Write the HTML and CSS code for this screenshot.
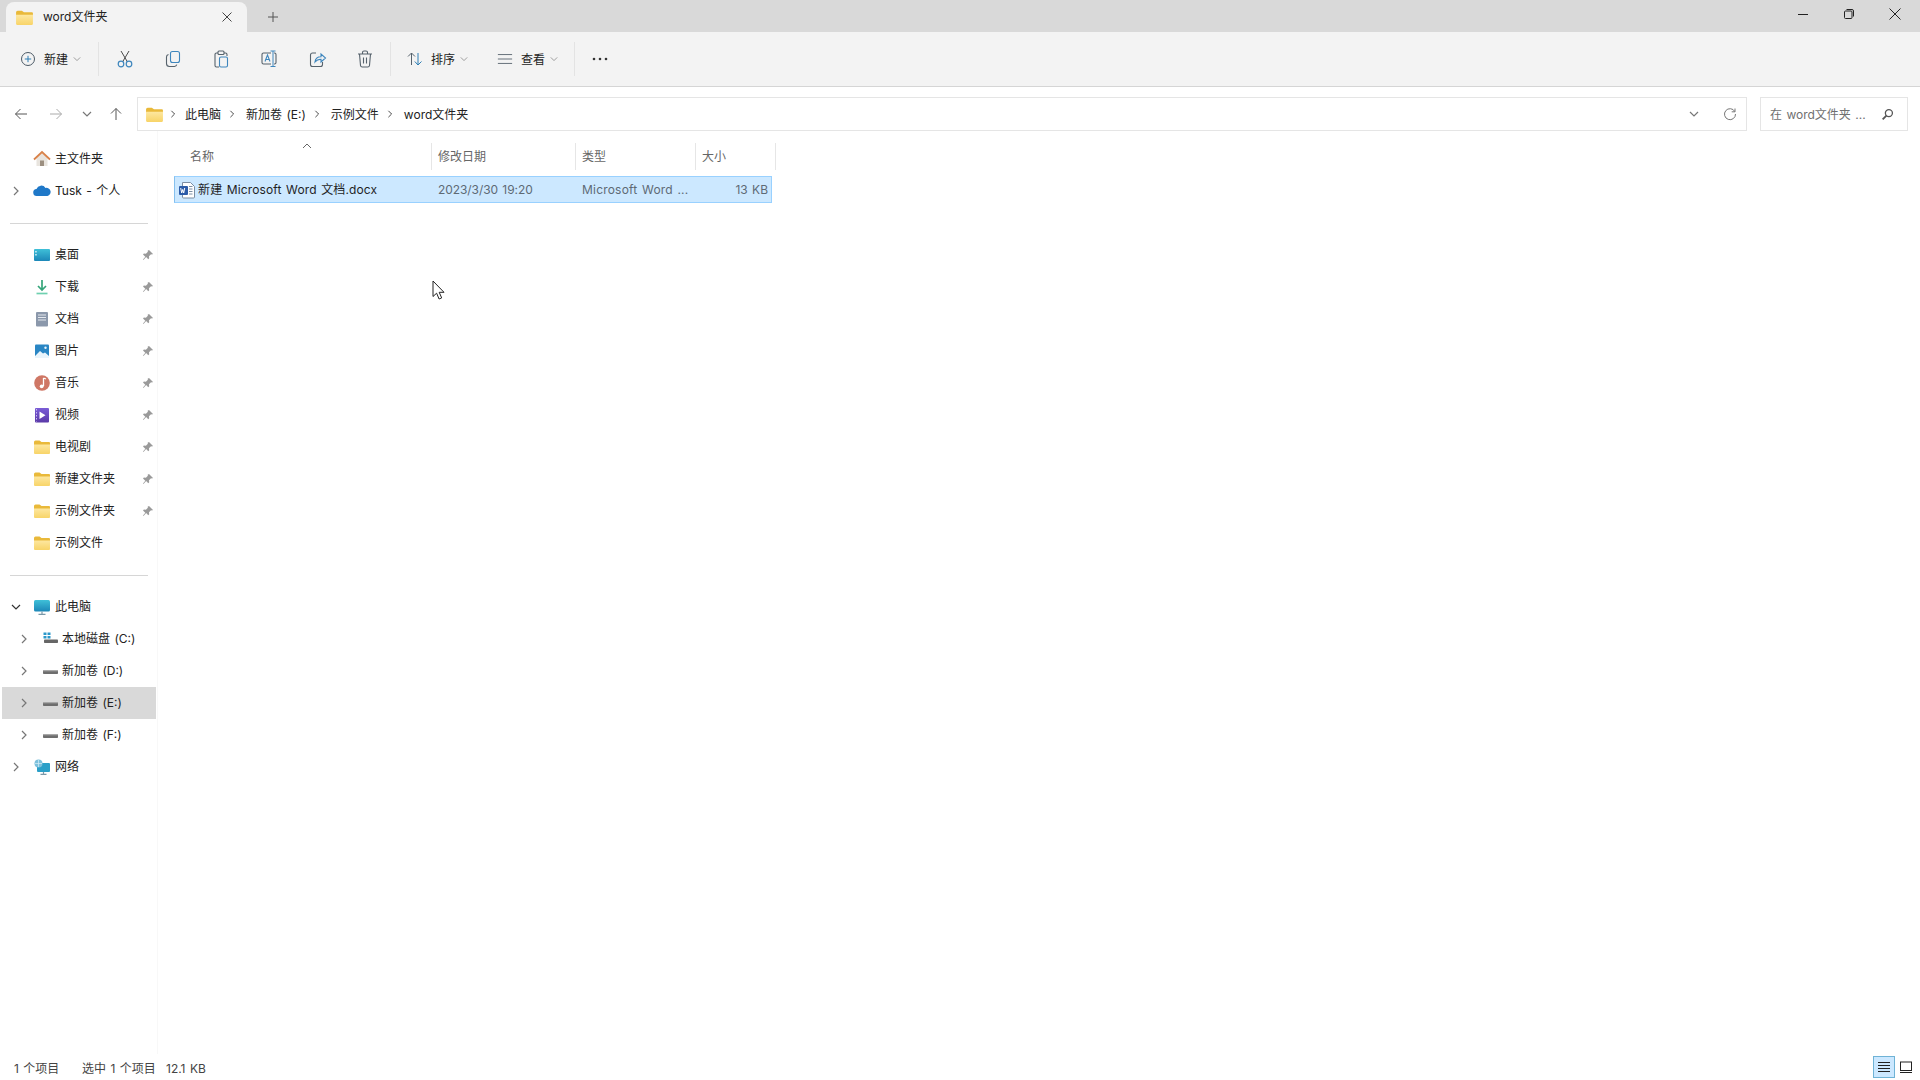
FILE: index.html
```html
<!DOCTYPE html>
<html lang="zh-CN">
<head>
<meta charset="utf-8">
<title>word文件夹</title>
<link rel="stylesheet" href="styles.css">
</head>
<body>
<svg class="sprite" xmlns="http://www.w3.org/2000/svg">
  <defs>
    <linearGradient id="fg" x1="0" y1="0" x2="0" y2="1"><stop offset="0" stop-color="#fde7a0"/><stop offset="1" stop-color="#f8d468"/></linearGradient>
    <linearGradient id="dg" x1="0" y1="0" x2="0" y2="1"><stop offset="0" stop-color="#3fc0d8"/><stop offset="1" stop-color="#1c87b8"/></linearGradient>
    <linearGradient id="vg" x1="0" y1="0" x2="0" y2="1"><stop offset="0" stop-color="#7a5cd6"/><stop offset="1" stop-color="#5b3aa8"/></linearGradient>
    <symbol id="folder" viewBox="0 0 18 16"><path d="M1 3a1.5 1.5 0 0 1 1.5-1.5h4L8.500 3H16a1 1 0 0 1 1 1v2H1z" fill="#e9b93a"/><path d="M1 5.500h16V14a1 1 0 0 1-1 1H2a1 1 0 0 1-1-1z" fill="url(#fg)"/></symbol>
    <symbol id="pin" viewBox="0 0 12 12"><path d="M7 1l4 4-1 .6-1-.3-2 2 .2 2-.9.9-2.200-2.300L1.500 11 1 10.500 3.300 7.700 1 5.500l.9-.9 2 .2 2-2-.3-1z" fill="#9a9a9a"/></symbol>
    <symbol id="right" viewBox="0 0 10 10"><path d="M3 1l4 4-4 4" fill="none" stroke="currentColor" stroke-width="1.200"/></symbol>
    <symbol id="down" viewBox="0 0 10 10"><path d="M1 3l4 4 4-4" fill="none" stroke="currentColor" stroke-width="1.200"/></symbol>
    <symbol id="drive" viewBox="0 0 18 18"><rect x="2" y="8" width="15" height="4" rx=".8" fill="#6e6e6e"/><rect x="2" y="8" width="15" height="1.300" fill="#a8a8a8"/></symbol>
  </defs>
</svg>

<header class="titlebar">
  <div class="tab">
    <svg class="tab-icon"><use href="#folder"/></svg>
    <span class="tab-title">word文件夹</span>
    <svg class="tab-close" viewBox="0 0 12 12"><path d="M1.500 1.500l9 9M10.500 1.500l-9 9" stroke="#444" fill="none"/></svg>
  </div>
  <svg class="tab-add" viewBox="0 0 12 12"><path d="M6 1v10M1 6h10" stroke="#555" fill="none"/></svg>
  <div class="winctl">
    <svg class="wc" viewBox="0 0 12 12"><path d="M1 6.500h10" stroke="#222" fill="none"/></svg>
    <svg class="wc" viewBox="0 0 12 12"><rect x="1.500" y="3" width="7.500" height="7.500" rx="1" fill="none" stroke="#222"/><path d="M3.500 1.500h5.500a1.500 1.500 0 0 1 1.500 1.500v5.500" fill="none" stroke="#222"/></svg>
    <svg class="wc" viewBox="0 0 12 12"><path d="M.5.500l11 11M11.500.500l-11 11" stroke="#222" fill="none"/></svg>
  </div>
</header>

<div class="toolbar">
  <div class="tb-labeled tb-new">
    <svg class="tb-i" viewBox="0 0 18 18"><circle cx="9" cy="9" r="6.500" fill="none" stroke="#4c5a66"/><path d="M9 5.800v6.400M5.800 9h6.400" stroke="#2f7fb5" fill="none"/></svg>
    <span>新建</span>
    <svg class="tb-chev"><use href="#down"/></svg>
  </div>
  <i class="tb-sep"></i>
  <div class="tb-btn"><svg class="tb-i" viewBox="0 0 20 20"><path d="M6 2l6.500 11M14 2L7.500 13" stroke="#4a4a4a" fill="none"/><circle cx="6" cy="15" r="2.800" fill="none" stroke="#3e86bd" stroke-width="1.200"/><circle cx="14" cy="15" r="2.800" fill="none" stroke="#3e86bd" stroke-width="1.200"/></svg></div>
  <div class="tb-btn"><svg class="tb-i" viewBox="0 0 20 20"><rect x="7.500" y="2.500" width="9" height="11" rx="2" fill="none" stroke="#3e86bd" stroke-width="1.100"/><path d="M5.500 5.500A2.500 2.500 0 0 0 3.500 8v6.500A3 3 0 0 0 6.500 17.500h5a2.500 2.500 0 0 0 2.300-1.800" fill="none" stroke="#56626c" stroke-width="1.100"/></svg></div>
  <div class="tb-btn"><svg class="tb-i" viewBox="0 0 20 20"><path d="M7 4H5.500A1.500 1.500 0 0 0 4 5.500v11A1.500 1.500 0 0 0 5.500 18H8M13 4h1.500A1.500 1.500 0 0 1 16 5.500V7" fill="none" stroke="#56626c" stroke-width="1.100"/><rect x="7" y="2" width="6" height="3.500" rx="1" fill="none" stroke="#56626c" stroke-width="1.100"/><rect x="8.500" y="8" width="8" height="10" rx="1.500" fill="none" stroke="#3e86bd" stroke-width="1.100"/></svg></div>
  <div class="tb-btn"><svg class="tb-i" viewBox="0 0 20 20"><path d="M12 4H4.500A1.500 1.500 0 0 0 3 5.500v8A1.500 1.500 0 0 0 4.500 15H12M15 4h.5A1.500 1.500 0 0 1 17 5.500v8a1.500 1.500 0 0 1-1.500 1.500H15" fill="none" stroke="#56626c" stroke-width="1.100"/><path d="M6 12.500l2.500-6.500 2.500 6.500M7 10.500h3" fill="none" stroke="#3e86bd" stroke-width="1.100"/><path d="M11.500 2h5M11.500 17.500h5M14 2v15.500" fill="none" stroke="#3e86bd"/></svg></div>
  <div class="tb-btn"><svg class="tb-i" viewBox="0 0 20 20"><path d="M9 4H5.500A2 2 0 0 0 3.500 6v9.500a2 2 0 0 0 2 2h8a2 2 0 0 0 2-2V13" fill="none" stroke="#56626c" stroke-width="1.100"/><path d="M8 13c.3-3.500 2.500-5.300 6-5.300V5l4.500 4-4.500 4v-2.800c-2.500 0-4.500.8-6 2.800z" fill="none" stroke="#3e86bd" stroke-width="1.100"/></svg></div>
  <div class="tb-btn"><svg class="tb-i" viewBox="0 0 20 20"><path d="M3 5h14M7.500 5V3.500A1.500 1.500 0 0 1 9 2h2a1.500 1.500 0 0 1 1.500 1.500V5M4.500 5l1 11.500A1.800 1.800 0 0 0 7.300 18h5.400a1.800 1.800 0 0 0 1.800-1.500l1-11.500M8.500 8.500v6M11.500 8.500v6" fill="none" stroke="#56626c" stroke-width="1.100"/></svg></div>
  <i class="tb-sep tb-sep-b"></i>
  <div class="tb-labeled tb-sort">
    <svg class="tb-i" viewBox="0 0 18 18"><path d="M5.500 15V3M2 6.500L5.500 3 9 6.500" fill="none" stroke="#56626c"/><path d="M12 3v12M8.800 11.500L12 15l3.500-3.500" fill="none" stroke="#2f7fb5"/></svg>
    <span>排序</span>
    <svg class="tb-chev"><use href="#down"/></svg>
  </div>
  <div class="tb-labeled tb-view">
    <svg class="tb-i" viewBox="0 0 18 18"><path d="M1 4h16M1 9h16M1 14h16" fill="none" stroke="#56626c"/></svg>
    <span>查看</span>
    <svg class="tb-chev"><use href="#down"/></svg>
  </div>
  <i class="tb-sep tb-sep-c"></i>
  <svg class="tb-more" viewBox="0 0 18 4"><circle cx="3" cy="2" r="1.300" fill="#333"/><circle cx="9" cy="2" r="1.300" fill="#333"/><circle cx="15" cy="2" r="1.300" fill="#333"/></svg>
</div>

<nav class="addrrow">
  <div class="navbtns">
    <svg class="nb" viewBox="0 0 14 14"><path d="M13 7H1.500M6.500 2L1.500 7l5 5" fill="none" stroke="#555"/></svg>
    <svg class="nb nb-off" viewBox="0 0 14 14"><path d="M1 7h11.500M7.500 2l5 5-5 5" fill="none" stroke="#aaa"/></svg>
    <svg class="nb nb-small"><use href="#down"/></svg>
    <svg class="nb" viewBox="0 0 14 14"><path d="M7 13V1.500M2 6.500l5-5 5 5" fill="none" stroke="#555"/></svg>
  </div>
  <div class="addrbox">
    <svg class="ab-folder"><use href="#folder"/></svg>
    <svg class="crumb-sep"><use href="#right"/></svg>
    <span>此电脑</span>
    <svg class="crumb-sep"><use href="#right"/></svg>
    <span>新加卷 (E:)</span>
    <svg class="crumb-sep"><use href="#right"/></svg>
    <span>示例文件</span>
    <svg class="crumb-sep"><use href="#right"/></svg>
    <span>word文件夹</span>
    <svg class="ab-down"><use href="#down"/></svg>
    <svg class="ab-refresh" viewBox="0 0 14 14"><path d="M11.800 4.500A5.500 5.500 0 1 0 12.500 7M12 1.500v3.300H8.700" fill="none" stroke="#777"/></svg>
  </div>
  <div class="searchbox">
    <span>在 word文件夹 ...</span>
    <svg class="sb-i" viewBox="0 0 14 14"><circle cx="8.500" cy="5.500" r="3.800" fill="none" stroke="#555" stroke-width="1.400"/><path d="M5.800 8.200L1.800 12.200" stroke="#555" stroke-width="2" fill="none"/></svg>
  </div>
</nav>

<main class="main">
  <aside class="side">
    <div class="row"><span class="slot"></span>
      <svg class="ic" viewBox="0 0 18 18"><path d="M3.500 8v8h11V8L9 3z" fill="#e8e4de"/><rect x="7" y="10.500" width="4" height="5.500" fill="#9c8f80"/><path d="M1 9.500L9 2l8 7.500" fill="none" stroke="#d9824a" stroke-width="1.800"/></svg>
      <span>主文件夹</span></div>
    <div class="row"><span class="slot"><svg class="chev"><use href="#right"/></svg></span>
      <svg class="ic" viewBox="0 0 18 18"><path d="M4 14a3.500 3.500 0 0 1-.5-7A5 5 0 0 1 12.500 6 4 4 0 0 1 14.500 14z" fill="#1f78c8"/></svg>
      <span>Tusk - 个人</span></div>
    <div class="divider"></div>
    <div class="row"><span class="slot"></span>
      <svg class="ic" viewBox="0 0 18 18"><rect x="1" y="3" width="16" height="12" rx="1" fill="url(#dg)"/><rect x="2.200" y="5" width="1.500" height="1.500" fill="#d5f1f7"/><rect x="2.200" y="8" width="1.500" height="1.500" fill="#d5f1f7"/></svg>
      <span class="grow">桌面</span><svg class="pin"><use href="#pin"/></svg></div>
    <div class="row"><span class="slot"></span>
      <svg class="ic" viewBox="0 0 18 18"><path d="M9 2v10M5 8l4 4 4-4" fill="none" stroke="#35a57a" stroke-width="1.700"/><path d="M3.500 15.500h11" stroke="#6fd0b0" stroke-width="1.700"/></svg>
      <span class="grow">下载</span><svg class="pin"><use href="#pin"/></svg></div>
    <div class="row"><span class="slot"></span>
      <svg class="ic" viewBox="0 0 18 18"><rect x="3" y="2" width="12" height="14.500" rx="1" fill="#8b98ab"/><path d="M5 5h8M5 7.500h8M5 10h8" stroke="#e4e8ee"/></svg>
      <span class="grow">文档</span><svg class="pin"><use href="#pin"/></svg></div>
    <div class="row"><span class="slot"></span>
      <svg class="ic" viewBox="0 0 18 18"><rect x="2" y="2.500" width="14" height="13.500" rx="1" fill="#2a86c4"/><path d="M2 14l5-5 3 2.500 2-1 4 3.500v2H2z" fill="#e9f4fb"/><circle cx="12.500" cy="5.800" r="1.200" fill="#e9f4fb"/></svg>
      <span class="grow">图片</span><svg class="pin"><use href="#pin"/></svg></div>
    <div class="row"><span class="slot"></span>
      <svg class="ic" viewBox="0 0 18 18"><circle cx="9" cy="9" r="7.800" fill="#cf7765"/><path d="M10.500 4v8M10.500 4l2.500 1" stroke="#fff" stroke-width="1.300" fill="none"/><circle cx="8.700" cy="12.300" r="1.900" fill="#fff"/></svg>
      <span class="grow">音乐</span><svg class="pin"><use href="#pin"/></svg></div>
    <div class="row"><span class="slot"></span>
      <svg class="ic" viewBox="0 0 18 18"><rect x="2" y="2" width="14" height="14.500" rx="1" fill="url(#vg)"/><path d="M6.500 5.500l6 3.700-6 3.700z" fill="#fff"/><path d="M3.500 3v12.500" stroke="#c9b9f0" stroke-dasharray="1.500 1.500"/></svg>
      <span class="grow">视频</span><svg class="pin"><use href="#pin"/></svg></div>
    <div class="row"><span class="slot"></span><svg class="ic"><use href="#folder"/></svg><span class="grow">电视剧</span><svg class="pin"><use href="#pin"/></svg></div>
    <div class="row"><span class="slot"></span><svg class="ic"><use href="#folder"/></svg><span class="grow">新建文件夹</span><svg class="pin"><use href="#pin"/></svg></div>
    <div class="row"><span class="slot"></span><svg class="ic"><use href="#folder"/></svg><span class="grow">示例文件夹</span><svg class="pin"><use href="#pin"/></svg></div>
    <div class="row"><span class="slot"></span><svg class="ic"><use href="#folder"/></svg><span class="grow">示例文件</span></div>
    <div class="divider"></div>
    <div class="row"><span class="slot"><svg class="chev chev-open"><use href="#down"/></svg></span>
      <svg class="ic" viewBox="0 0 18 18"><rect x="1" y="2" width="16" height="11.500" rx="1.500" fill="url(#dg)"/><path d="M9 13.500v2.500M5.500 16.300h7" stroke="#7a98a8" stroke-width="1.200"/></svg>
      <span>此电脑</span></div>
    <div class="row sub"><span class="slot"><svg class="chev"><use href="#right"/></svg></span>
      <svg class="ic" viewBox="0 0 18 18"><rect x="3" y="9.500" width="14" height="3.500" rx=".8" fill="#666"/><path d="M2.500 2.500h3v2.500h-3zM6.500 2.500h3v2.500h-3zM2.500 6h3v2.500h-3zM6.500 6h3v2.500h-3z" fill="#2a97c9"/></svg>
      <span>本地磁盘 (C:)</span></div>
    <div class="row sub"><span class="slot"><svg class="chev"><use href="#right"/></svg></span><svg class="ic"><use href="#drive"/></svg><span>新加卷 (D:)</span></div>
    <div class="row sub active"><span class="slot"><svg class="chev"><use href="#right"/></svg></span><svg class="ic"><use href="#drive"/></svg><span>新加卷 (E:)</span></div>
    <div class="row sub"><span class="slot"><svg class="chev"><use href="#right"/></svg></span><svg class="ic"><use href="#drive"/></svg><span>新加卷 (F:)</span></div>
    <div class="row"><span class="slot"><svg class="chev"><use href="#right"/></svg></span>
      <svg class="ic" viewBox="0 0 18 18"><rect x="4" y="5" width="13" height="9" rx="1" fill="#2a9fc8"/><path d="M10.500 14v2M7.500 16.300h6" stroke="#7a98a8" stroke-width="1.200"/><circle cx="5.500" cy="5.500" r="4" fill="#7cc0dc"/><path d="M2 5.500h7M5.500 2v7" stroke="#d6eef6" stroke-width=".7"/></svg>
      <span>网络</span></div>
  </aside>
  <section class="files">
    <div class="thead">
      <div class="th th-name">名称<svg class="sort" viewBox="0 0 10 6"><path d="M1 5l4-4 4 4" fill="none" stroke="#666"/></svg></div>
      <div class="th">修改日期</div>
      <div class="th">类型</div>
      <div class="th">大小</div>
    </div>
    <div class="frow">
      <div class="td td-name">
        <svg class="docx" viewBox="0 0 18 18"><path d="M4.500 1.500h8l4 4V16a1 1 0 0 1-1 1h-10a1 1 0 0 1-1-1z" fill="#fff" stroke="#7a8da3"/><path d="M11 5.500h3.500M11 8h3.500M11 10.500h3.500M11 13h3.500" stroke="#7c8ea4"/><rect x="1" y="5" width="9" height="9" rx="1" fill="#2b5ba8"/><path d="M2.700 7l1 5 1-3.500 1 3.500 1-5" fill="none" stroke="#fff"/></svg>
        <span class="fname">新建 Microsoft Word 文档.docx</span>
      </div>
      <div class="td td-meta td-date">2023/3/30 19:20</div>
      <div class="td td-meta td-type">Microsoft Word ...</div>
      <div class="td td-meta td-size">13 KB</div>
    </div>
  </section>
</main>

<footer class="status">
  <span class="s1">1 个项目</span>
  <span class="s2">选中 1 个项目</span>
  <span class="s3">12.1 KB</span>
  <span class="grow"></span>
  <div class="vt vt-on"><svg viewBox="0 0 14 14"><path d="M1 2.500h12M1 5.500h12M1 8.500h12M1 11.500h12" stroke="#222" fill="none"/></svg></div>
  <div class="vt"><svg viewBox="0 0 14 14"><rect x="1.500" y="2" width="11" height="8.500" fill="none" stroke="#222"/><path d="M1 12.500h12" stroke="#222"/></svg></div>
</footer>

<svg class="cursor" viewBox="0 0 13 20"><path d="M1 1v15.500l3.600-3.300 2.500 5.800 2.600-1.100-2.500-5.600H12z" fill="#fff" stroke="#222" stroke-width="1"/></svg>
</body>
</html>
```
FILE: styles.css
```css
* { box-sizing: border-box; }
html, body { height: 100%; }
body {
  margin: 0;
  height: 100vh;
  display: flex;
  flex-direction: column;
  overflow: hidden;
  position: relative;
  background: #fff;
  color: #222;
  font: 12px/16px Inter, "Noto Sans CJK SC", sans-serif;
  word-spacing: 1px;
}
svg { display: block; flex: none; }
.sprite { width: 0; height: 0; overflow: hidden; }
.grow { flex: 1; }

/* title bar */
.titlebar { height: 32px; flex: none; background: #d9d9d9; display: flex; align-items: flex-end; padding-left: 6px; }
.tab { width: 241px; height: 30px; background: #f3f3f3; border-radius: 8px 8px 0 0; display: flex; align-items: center; padding-left: 9px; }
.tab-icon { width: 19px; height: 17px; }
.tab-title { margin-left: 9px; flex: 1; }
.tab-close { width: 12px; height: 12px; margin-right: 14px; }
.tab-add { width: 12px; height: 12px; margin: 0 0 9px 20px; }
.winctl { margin-left: auto; align-self: flex-start; display: flex; gap: 34px; padding: 8px 19px 0 0; }
.wc { width: 12px; height: 12px; }

/* command bar */
.toolbar { height: 55px; flex: none; background: #f3f3f3; border-bottom: 1px solid #d5d5d5; display: flex; align-items: center; padding-left: 19px; }
.tb-i { width: 18px; height: 18px; }
.tb-labeled { display: flex; align-items: center; }
.tb-labeled span { margin-left: 7px; width: 26px; position: relative; top: 1px; }
.tb-chev { width: 8px; height: 8px; color: #999; margin-left: 3px; }
.tb-new { width: 79px; }
.tb-sep { width: 1px; height: 34px; background: #e3e3e3; margin-right: 2px; }
.tb-btn { width: 48px; height: 40px; display: flex; align-items: center; justify-content: center; }
.tb-btn .tb-i { width: 20px; height: 20px; }
.tb-sep-b { margin: 0 0 0 1px; }
.tb-sort { margin-left: 15px; width: 91px; }
.tb-view { width: 77px; }
.tb-view .tb-i { width: 16px; height: 16px; }
.tb-view span { margin-left: 8px; }
.tb-sep-c { margin: 0; }
.tb-more { width: 18px; height: 4px; margin-left: 16px; }

/* address row */
.addrrow { height: 44px; flex: none; padding-top: 10px; display: flex; align-items: flex-start; }
.navbtns { width: 137px; height: 34px; display: flex; align-items: center; padding-left: 14px; }
.nb { width: 14px; height: 14px; margin-right: 21px; }
.nb-small { width: 10px; height: 10px; color: #777; margin-left: -2px; margin-right: 17px; }
.addrbox { width: 1610px; height: 34px; border: 1px solid #e5e5e5; display: flex; align-items: center; padding-left: 7px; }
.addrbox span { position: relative; top: 1px; }
.ab-folder { width: 19px; height: 17px; }
.crumb-sep { width: 8px; height: 8px; color: #444; margin: 0 8px 0 5px; }
.addrbox span + .crumb-sep { margin: 0 10px 0 7px; }
.ab-down { width: 10px; height: 10px; color: #777; margin-left: auto; }
.ab-refresh { width: 14px; height: 14px; margin: 0 9px 0 24px; }
.searchbox { width: 148px; height: 34px; margin-left: 13px; border: 1px solid #e5e5e5; display: flex; align-items: center; justify-content: space-between; padding: 0 13px 0 9px; color: #707070; }
.searchbox span { position: relative; top: 1px; }
.sb-i { width: 13px; height: 13px; }

/* main */
.main { flex: 1; min-height: 0; display: flex; }
.side { width: 158px; flex: none; padding-top: 12px; padding-left: 2px; border-right: 1px solid #f8f8f8; }
.row { width: 154px; height: 32px; display: flex; align-items: center; }
.row.active { background: #d9d9d9; }
.slot { width: 32px; padding-left: 9px; flex: none; }
.sub .slot { width: 39px; padding-left: 17px; }
.chev { width: 10px; height: 10px; color: #777; }
.chev-open { color: #333; }
.ic { width: 18px; height: 18px; margin-right: 3px; margin-left: -1px; }
.ic + span { margin-left: 1px; }
.sub .ic { margin-left: 0; }
.sub .ic + span { margin-left: 0; }
.row .pin { width: 12px; height: 12px; margin-right: 2px; }
.divider { width: 138px; height: 32px; margin-left: 8px; background: linear-gradient(#d6d6d6, #d6d6d6) 0 16px / 100% 1px no-repeat; }

/* file list */
.files { flex: 1; padding: 12px 0 0 16px; }
.thead { display: grid; grid-template-columns: 258px 144px 120px 80px; height: 33px; }
.th { height: 27px; padding-left: 6px; display: flex; align-items: center; border-right: 1px solid #e6e6e6; color: #666; }
.th-name { padding-left: 16px; position: relative; }
.sort { width: 10px; height: 6px; position: absolute; left: 128px; top: 0; }
.frow { width: 598px; height: 27px; display: grid; grid-template-columns: 257px 144px 120px 75px; background: #cce8ff; border: 1px solid #99d1ff; border-left-color: #85c0ee; }
.td { display: flex; align-items: center; padding-left: 6px; white-space: nowrap; }
.td-name { padding-left: 3px; }
.docx { width: 18px; height: 18px; margin-right: 2px; }
.fname { color: #1f1f1f; letter-spacing: .13px; }
.td-meta { color: #5e6a75; }
.td-date { letter-spacing: -.07px; }
.td-type { letter-spacing: .2px; }
.td-size { justify-content: flex-end; padding: 0 3px 0 0; }

/* status bar */
.status { height: 26px; flex: none; display: flex; align-items: center; padding: 0 3px 0 14px; color: #444; }
.status > span { position: relative; top: 2px; }
.s1 { width: 68px; }
.s2 { width: 84px; }
.vt { width: 22px; height: 22px; display: flex; align-items: center; justify-content: center; }
.vt svg { width: 14px; height: 14px; }
.vt-on { background: #cce8ff; border: 1px solid #6fb3d6; }

/* pointer captured in the screenshot */
.cursor { position: absolute; left: 432px; top: 280px; width: 13px; height: 20px; }
```
